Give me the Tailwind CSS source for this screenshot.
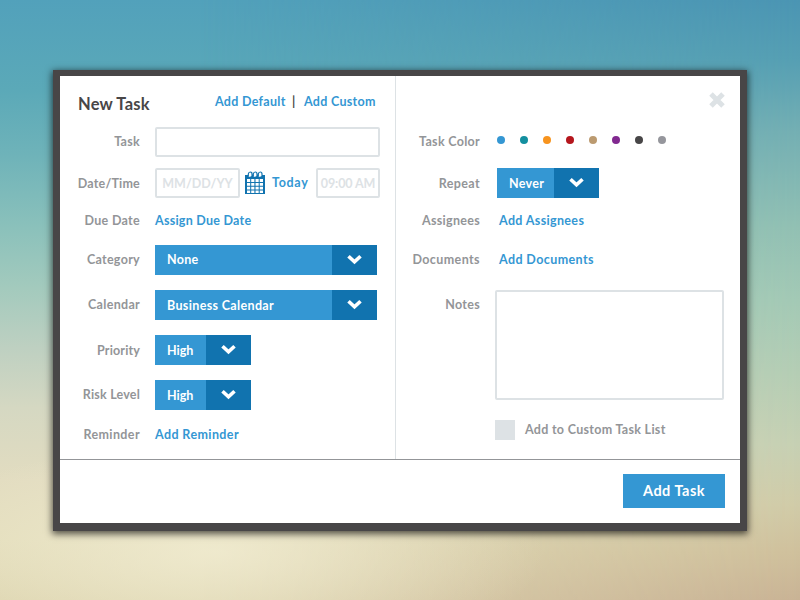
<!DOCTYPE html>
<html lang="en">
<head>
<meta charset="utf-8">
<title>New Task</title>
<script src="https://cdn.jsdelivr.net/npm/@tailwindcss/browser@4"></script>
</head>
<body class="relative w-[800px] h-[600px] overflow-hidden font-['Lato','Open_Sans',sans-serif] font-bold text-[12.5px] tracking-[0.3px] leading-[18px] text-[#939598] bg-[linear-gradient(to_bottom,#52a1bb_0%,#5ba9b8_15%,#6fb3b9_26%,#8bc1bb_38%,#a3cabd_48%,#bed0c1_58%,#d5d8c2_68%,#e2dcc0_80%,#e2dcba_90%,#ddd5b0_100%)]">
<div class="absolute inset-0 -z-10 bg-[linear-gradient(to_bottom,#4b95b3_0%,#569fb3_10%,#74afb3_22%,#92c0b3_38%,#a3c9b5_50%,#b4cdb4_62%,#c6d0b3_74%,#d0cba8_84%,#cfc09c_92%,#c9b395_100%)] [mask-image:linear-gradient(to_right,transparent_25%,black_100%)]"></div>
<div class="absolute inset-0 -z-10 bg-[radial-gradient(ellipse_330px_110px_at_27%_92%,rgba(243,238,212,0.75),transparent)]"></div>
<div class="w-[694px] h-[461px] ml-[53px] mt-[70px] bg-white border-[#484647] border-t-[6px] border-x-[7px] border-b-[8px] shadow-[0_2px_7px_1px_rgba(0,0,0,0.65)] flex flex-col">
  <svg class="hidden">
    <symbol id="chev" viewBox="0 0 16 11"><path d="M1.500 2.300 7.500 7.900l6-5.600" fill="none" stroke="#fff" stroke-width="3.600"/></symbol>
  </svg>
  <div class="flex h-[384px] border-b border-[#939598]">
    <section class="w-[336px] border-r border-[#dde2e5] flex flex-col">
      <header class="flex h-[51px] pl-[18px] pt-[17px]">
        <h1 class="w-[137px] text-[16.5px] leading-[22px] text-[#484647] tracking-[0.2px] whitespace-nowrap">New Task</h1>
        <nav class="flex text-[#3497d3] whitespace-nowrap">
          <a class="w-[77px]">Add Default</a><span class="w-[12px] text-[#484647]">|</span><a>Add Custom</a>
        </nav>
      </header>
      <div class="flex h-[30px] items-center gap-[15px]">
        <label class="w-[80px] text-right">Task</label>
        <div class="w-[225px] h-[30px] border-2 border-[#dde2e5] rounded-[2px]"></div>
      </div>
      <div class="flex h-[30px] mt-[11px] items-center">
        <label class="w-[80px] mr-[15px] pt-[2px] text-right tracking-[0.2px]">Date/Time</label>
        <div class="w-[85px] h-[30px] border-2 border-[#dde2e5] rounded-[2px] text-[#dde2e5] text-center leading-[28px] tracking-[0px] whitespace-nowrap">MM/DD/YY</div>
        <svg class="w-[20px] h-[23px] ml-[5px] mb-[2px]" viewBox="0 0 20 23">
          <path d="M0 4h20v19H0z" fill="#1173af"/>
          <path d="M2 8h3.200v3H2zm4.200 0h3.200v3H6.200zm4.300 0h3.200v3h-3.200zm4.200 0H18v3h-3.300zM2 12h3.200v2.700H2zm4.200 0h3.200v2.700H6.200zm4.300 0h3.200v2.700h-3.200zm4.200 0H18v2.700h-3.300zM2 15.700h3.200v2.700H2zm4.200 0h3.200v2.700H6.200zm4.300 0h3.200v2.700h-3.200zm4.200 0H18v2.700h-3.300zM2 19.400h3.200V22H2zm4.200 0h3.200V22H6.200zm4.300 0h3.200V22h-3.200zm4.200 0H18V22h-3.300z" fill="#fff"/>
          <path d="M3.300 5.800V3q.3-2 2-2T7 3v2.800H5.600M8.300 5.800V3q.3-2 2-2T12 3v2.800h-1.400M13.300 5.800V3q.3-2 2-2T17 3v2.800h-1.400" fill="#fff" stroke="#1173af" stroke-width="1.200"/>
        </svg>
        <a class="w-[44px] ml-[7px] mb-[1px] text-[#3497d3] tracking-[0.7px]">Today</a>
        <div class="flex w-[64px] h-[30px] border-2 border-[#dde2e5] rounded-[2px] text-[#dde2e5] justify-center leading-[28px] tracking-[-0.1px] whitespace-nowrap">09:00 AM</div>
      </div>
      <div class="flex h-[18px] mt-[14px] gap-[15px]">
        <label class="w-[80px] text-right">Due Date</label><a class="text-[#3497d3] tracking-[0.25px]">Assign Due Date</a>
      </div>
      <div class="flex h-[30px] mt-[15px] items-center gap-[15px]">
        <label class="w-[80px] text-right">Category</label>
        <div class="flex w-[222px] h-[30px] bg-[#3497d3] text-white items-center justify-between pl-[12px]"><span>None</span><span class="w-[45px] h-[30px] pb-[1px] bg-[#1173af] grid place-items-center"><svg class="w-[16px] h-[11px]"><use href="#chev"/></svg></span></div>
      </div>
      <div class="flex h-[30px] mt-[15px] items-center gap-[15px]">
        <label class="w-[80px] text-right">Calendar</label>
        <div class="flex w-[222px] h-[30px] bg-[#3497d3] text-white items-center justify-between pl-[12px]"><span class="pt-[2px] tracking-[0.35px]">Business Calendar</span><span class="w-[45px] h-[30px] pb-[1px] bg-[#1173af] grid place-items-center"><svg class="w-[16px] h-[11px]"><use href="#chev"/></svg></span></div>
      </div>
      <div class="flex h-[30px] mt-[15px] items-center gap-[15px]">
        <label class="w-[80px] pt-[2px] text-right tracking-[0.15px]">Priority</label>
        <div class="flex w-[96px] h-[30px] bg-[#3497d3] text-white items-center justify-between pl-[12px]"><span class="pt-[2px] tracking-[0px]">High</span><span class="w-[45px] h-[30px] pb-[1px] bg-[#1173af] grid place-items-center"><svg class="w-[16px] h-[11px]"><use href="#chev"/></svg></span></div>
      </div>
      <div class="flex h-[30px] mt-[15px] items-center gap-[15px]">
        <label class="w-[80px] text-right tracking-[0.2px]">Risk Level</label>
        <div class="flex w-[96px] h-[30px] bg-[#3497d3] text-white items-center justify-between pl-[12px]"><span class="pt-[2px] tracking-[0px]">High</span><span class="w-[45px] h-[30px] pb-[1px] bg-[#1173af] grid place-items-center"><svg class="w-[16px] h-[11px]"><use href="#chev"/></svg></span></div>
      </div>
      <div class="flex h-[18px] mt-[16px] gap-[15px]">
        <label class="w-[80px] text-right tracking-[0.4px]">Reminder</label><a class="text-[#3497d3] tracking-[0.4px]">Add Reminder</a>
      </div>
    </section>
    <section class="flex-1 flex flex-col">
      <header class="flex h-[51px] justify-end pr-[15px] pt-[16px]">
        <svg class="w-[16px] h-[16px]" viewBox="0 0 16 16"><path d="M2 2l12 12M14 2 2 14" stroke="#dde2e5" stroke-width="5"/></svg>
      </header>
      <div class="flex h-[30px] items-center gap-[17px]">
        <label class="w-[84px] text-right whitespace-nowrap">Task Color</label>
        <div class="flex gap-[15px] mb-[4px]">
          <i class="size-2 rounded-full bg-[#3497d3]"></i><i class="size-2 rounded-full bg-[#148f9f]"></i><i class="size-2 rounded-full bg-[#f7941e]"></i><i class="size-2 rounded-full bg-[#b5161d]"></i><i class="size-2 rounded-full bg-[#bb9a70]"></i><i class="size-2 rounded-full bg-[#812990]"></i><i class="size-2 rounded-full bg-[#484647]"></i><i class="size-2 rounded-full bg-[#95969c]"></i>
        </div>
      </div>
      <div class="flex h-[30px] mt-[11px] items-center gap-[17px]">
        <label class="w-[84px] pt-[2px] text-right tracking-[0.4px]">Repeat</label>
        <div class="flex w-[102px] h-[30px] bg-[#3497d3] text-white items-center justify-between pl-[12px]"><span class="pt-[2px]">Never</span><span class="w-[45px] h-[30px] pb-[1px] bg-[#1173af] grid place-items-center"><svg class="w-[16px] h-[11px]"><use href="#chev"/></svg></span></div>
      </div>
      <div class="flex h-[18px] mt-[14px] gap-[19px]">
        <label class="w-[84px] text-right">Assignees</label><a class="text-[#3497d3] tracking-[0.35px]">Add Assignees</a>
      </div>
      <div class="flex h-[18px] mt-[21px] gap-[19px]">
        <label class="w-[84px] text-right tracking-[0.4px]">Documents</label><a class="text-[#3497d3] tracking-[0.4px]">Add Documents</a>
      </div>
      <div class="flex h-[110px] mt-[21px] gap-[15px]">
        <label class="w-[84px] text-right pt-[6px]">Notes</label>
        <div class="w-[229px] border-2 border-[#dde2e5] rounded-[2px]"></div>
      </div>
      <div class="flex h-[20px] mt-[20px] pl-[99px] items-center gap-[10px]">
        <i class="size-5 bg-[#dde2e5]"></i><label>Add to Custom Task List</label>
      </div>
    </section>
  </div>
  <footer class="flex-1 flex justify-end pr-[15px] pt-[14px]">
    <button class="w-[102px] h-[34px] pb-[1px] bg-[#3497d3] text-white text-[14.5px] tracking-[0.5px] font-bold">Add Task</button>
  </footer>
</div>
</body>
</html>
